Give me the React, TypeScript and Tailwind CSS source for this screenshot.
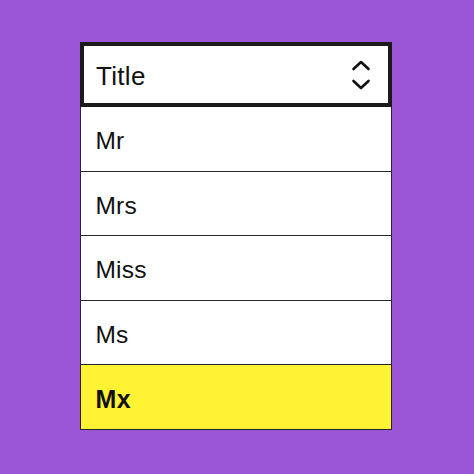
const OPTIONS = ["Mr", "Mrs", "Miss", "Ms", "Mx"];
const SELECTED = "Mx";

function Chevrons() {
  return (
    <svg width="20" height="30" viewBox="0 0 20 30" fill="none" stroke="#111" strokeWidth="2.6" strokeLinecap="round" strokeLinejoin="round">
      <polyline points="2.5,9 10,2 17.5,9" />
      <polyline points="2.5,21 10,28 17.5,21" />
    </svg>
  );
}

export default function App() {
  return (
    <div className="w-[474px] h-[474px] bg-[#9a56d4] pt-[42px] pl-[80px] font-['Liberation_Sans',Arial,sans-serif] text-[#111]">
      <div className="w-[312px]">
        {/* Select trigger */}
        <div className="h-[65px] border-4 border-[#1b1b1b] bg-white flex items-center justify-between pl-3 pr-[17px]">
          <span className="text-[26px] leading-none pt-[3px] tracking-[0.3px]">Title</span>
          <Chevrons />
        </div>

        {/* Options */}
        <div className="border-x-[1.5px] border-[#262626]">
          {OPTIONS.map((opt) => {
            const selected = opt === SELECTED;
            return (
              <div
                key={opt}
                className={[
                  "h-[64.6px] border-b-[1.5px] border-[#262626] flex items-center pl-[14.5px] pt-[5px]",
                  selected ? "bg-[#fff333] font-bold" : "bg-white",
                ].join(" ")}
              >
                <span className={selected ? "text-[25px] leading-none tracking-[0.5px]" : "text-[24.5px] leading-none tracking-[0.2px]"}>{opt}</span>
              </div>
            );
          })}
        </div>
      </div>
    </div>
  );
}
